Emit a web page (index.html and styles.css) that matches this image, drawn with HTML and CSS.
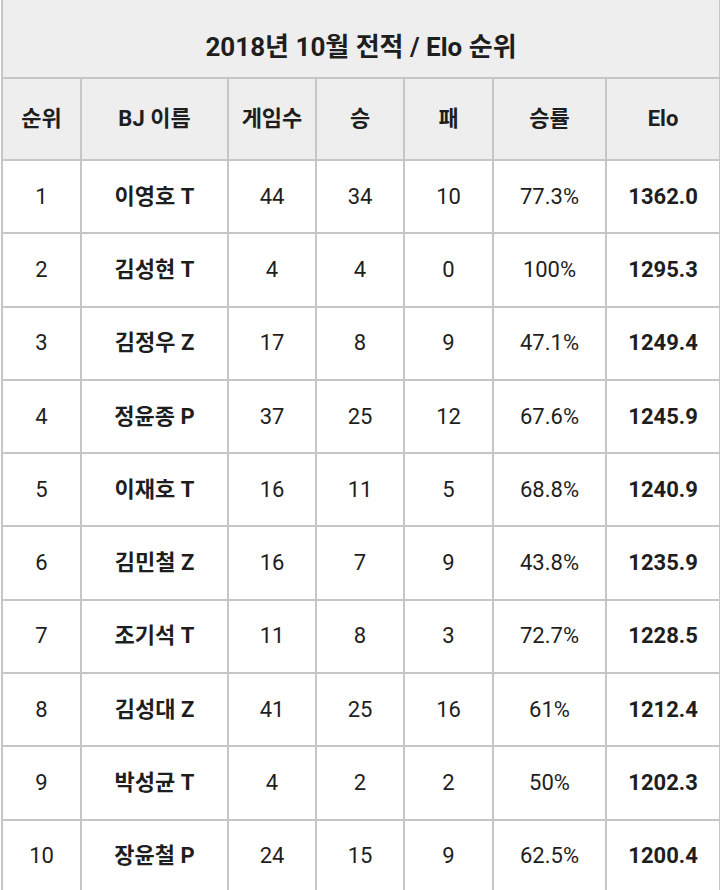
FILE: index.html
```html
<!DOCTYPE html>
<html lang="ko">
<head>
<meta charset="utf-8">
<link rel="stylesheet" href="styles.css">
</head>
<body>
<table class="rank">
<colgroup>
<col class="c-rank"><col class="c-name"><col class="c-games"><col class="c-win"><col class="c-loss"><col class="c-rate"><col class="c-elo">
</colgroup>
<thead>
<tr class="title-row"><th colspan="7">2018년 10월 전적 / Elo 순위</th></tr>
<tr class="head-row"><th>순위</th><th>BJ 이름</th><th>게임수</th><th>승</th><th>패</th><th>승률</th><th>Elo</th></tr>
</thead>
<tbody>
<tr><td>1</td><td class="name">이영호 T</td><td>44</td><td>34</td><td>10</td><td>77.3%</td><td class="elo">1362.0</td></tr>
<tr><td>2</td><td class="name">김성현 T</td><td>4</td><td>4</td><td>0</td><td>100%</td><td class="elo">1295.3</td></tr>
<tr><td>3</td><td class="name">김정우 Z</td><td>17</td><td>8</td><td>9</td><td>47.1%</td><td class="elo">1249.4</td></tr>
<tr><td>4</td><td class="name">정윤종 P</td><td>37</td><td>25</td><td>12</td><td>67.6%</td><td class="elo">1245.9</td></tr>
<tr><td>5</td><td class="name">이재호 T</td><td>16</td><td>11</td><td>5</td><td>68.8%</td><td class="elo">1240.9</td></tr>
<tr><td>6</td><td class="name">김민철 Z</td><td>16</td><td>7</td><td>9</td><td>43.8%</td><td class="elo">1235.9</td></tr>
<tr><td>7</td><td class="name">조기석 T</td><td>11</td><td>8</td><td>3</td><td>72.7%</td><td class="elo">1228.5</td></tr>
<tr><td>8</td><td class="name">김성대 Z</td><td>41</td><td>25</td><td>16</td><td>61%</td><td class="elo">1212.4</td></tr>
<tr><td>9</td><td class="name">박성균 T</td><td>4</td><td>2</td><td>2</td><td>50%</td><td class="elo">1202.3</td></tr>
<tr><td>10</td><td class="name">장윤철 P</td><td>24</td><td>15</td><td>9</td><td>62.5%</td><td class="elo">1200.4</td></tr>
</tbody>
</table>
</body>
</html>
```
FILE: styles.css
```css
html, body {
  margin: 0;
  padding: 0;
  background: #ffffff;
}
body {
  font-family: Roboto, "Noto Sans CJK KR", sans-serif;
  color: #1e1e1e;
  overflow: hidden;
}
.rank {
  border-collapse: collapse;
  table-layout: fixed;
  width: 718px;
  margin: -2px 0 0 1px;
}
.c-rank { width: 79px; }
.c-name { width: 147px; }
.c-games { width: 88px; }
.c-win { width: 88px; }
.c-loss { width: 89px; }
.c-rate { width: 113px; }
.c-elo { width: 114px; }
.rank th, .rank td {
  border: 2px solid #c6c6c6;
  text-align: center;
  vertical-align: middle;
  padding: 0;
  font-size: 22px;
  line-height: 1;
}
.rank th {
  background: #eeeeee;
  font-weight: 700;
}
.title-row th {
  height: 61px;
  padding-top: 16px;
  font-size: 26px;
}
.head-row th {
  height: 80px;
}
.rank td {
  height: 71.3px;
  font-weight: 400;
}
.rank td.name, .rank td.elo {
  font-weight: 700;
}
```
